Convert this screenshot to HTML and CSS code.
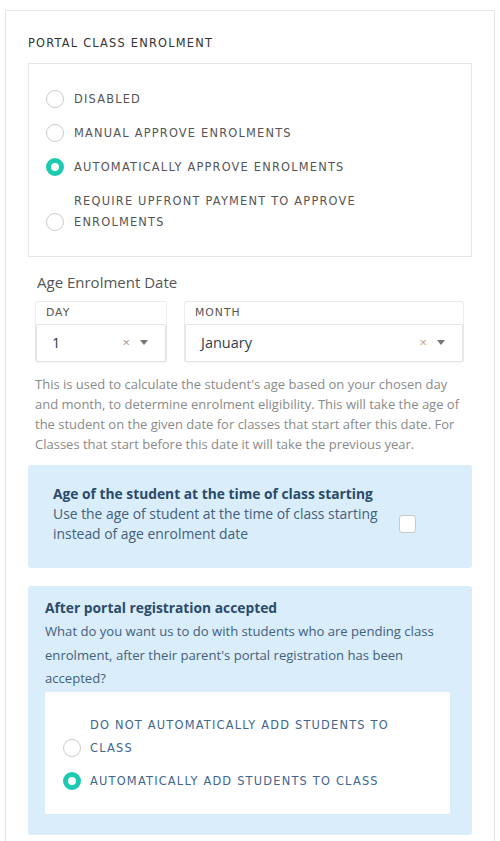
FILE: index.html
```html
<!DOCTYPE html>
<html lang="en">
<head>
<meta charset="utf-8">
<title>Portal Class Enrolment</title>
<link rel="stylesheet" href="styles.css">
</head>
<body>
<div class="card">
  <h2 class="section-title">Portal Class Enrolment</h2>

  <div class="radio-box">
    <label class="radio-row"><span class="radio"></span><span class="radio-text">Disabled</span></label>
    <label class="radio-row"><span class="radio"></span><span class="radio-text">Manual approve enrolments</span></label>
    <label class="radio-row"><span class="radio checked"></span><span class="radio-text">Automatically approve enrolments</span></label>
    <label class="radio-row"><span class="radio"></span><span class="radio-text">Require upfront payment to approve<br>enrolments</span></label>
  </div>

  <div class="date-section">
    <div class="date-heading">Age Enrolment Date</div>
    <div class="date-fields">
      <div class="field field-day">
        <div class="field-label">Day</div>
        <div class="select">
          <span class="value">1</span>
          <span class="clear">×</span>
          <span class="caret"></span>
        </div>
      </div>
      <div class="field field-month">
        <div class="field-label">Month</div>
        <div class="select">
          <span class="value">January</span>
          <span class="clear clear-hover">×</span>
          <span class="caret"></span>
        </div>
      </div>
    </div>
    <p class="help">This is used to calculate the student's age based on your chosen day and month, to determine enrolment eligibility. This will take the age of the student on the given date for classes that start after this date. For Classes that start before this date it will take the previous year.</p>
  </div>

  <div class="info-box info-age">
    <div class="info-title">Age of the student at the time of class starting</div>
    <div class="info-row">
      <div class="info-text">Use the age of student at the time of class starting instead of age enrolment date</div>
      <span class="checkbox"></span>
    </div>
  </div>

  <div class="info-box info-after">
    <div class="info-title">After portal registration accepted</div>
    <div class="info-text wide">What do you want us to do with students who are pending class enrolment, after their parent's portal registration has been accepted?</div>
    <div class="choice-box">
      <label class="radio-row blue"><span class="radio"></span><span class="radio-text">Do not automatically add students to<br>class</span></label>
      <label class="radio-row blue"><span class="radio checked"></span><span class="radio-text">Automatically add students to class</span></label>
    </div>
  </div>
</div>
</body>
</html>
```

FILE: styles.css
```css
* { box-sizing: border-box; }

html, body {
  margin: 0;
  padding: 0;
  background: #ffffff;
}

body {
  font-family: "Open Sans", "Noto Sans", sans-serif;
  color: #555;
}

.card {
  margin: 10px 0 0 5px;
  width: 490px;
  min-height: 860px;
  border: 1px solid #e7e7e7;
  border-bottom: none;
  padding: 24px 22px 0 22px;
}

.section-title {
  margin: 0 0 12px 0;
  font-family: "DejaVu Sans", sans-serif;
  font-weight: normal;
  font-size: 11.4px;
  line-height: 16px;
  letter-spacing: 1.2px;
  text-transform: uppercase;
  color: #333;
}

.radio-box {
  border: 1px solid #e6e6e6;
  padding: 18px 10px 17px 17px;
}

.radio-row {
  display: flex;
  align-items: flex-end;
  padding: 6.5px 0;
}

.radio {
  flex: 0 0 18px;
  width: 18px;
  height: 18px;
  border-radius: 50%;
  border: 1px solid #cccccc;
  background: #fff;
  margin-bottom: 1.5px;
}

.radio.checked {
  border: 5.5px solid #1cc9b1;
}

.radio-text {
  margin-left: 10px;
  font-family: "DejaVu Sans", sans-serif;
  font-size: 11.4px;
  line-height: 21px;
  letter-spacing: 1.2px;
  text-transform: uppercase;
  color: #555;
}

.date-section {
  padding: 15px 8px 0 7px;
}

.date-heading {
  font-size: 15px;
  line-height: 20px;
  padding-left: 2px;
  color: #555;
}

.date-fields {
  display: flex;
  gap: 17px;
  margin-top: 9px;
}

.field {
  border: 1px solid #ececec;
  border-radius: 2px;
}

.field-day { width: 132px; }
.field-month { width: 280px; }

.field-label {
  height: 22px;
  line-height: 22px;
  padding-left: 10px;
  font-family: "DejaVu Sans", sans-serif;
  font-size: 10.8px;
  letter-spacing: 1px;
  text-transform: uppercase;
  color: #555;
}

.select {
  display: flex;
  align-items: center;
  height: 38px;
  margin: 0 0 -1px 0;
  border: 1px solid #e4e4e4;
  border-radius: 2px;
  box-shadow: 0 1px 2px rgba(0, 0, 0, 0.05);
  padding: 0 17px 2px 15px;
  background: #fff;
}

.value {
  flex: 1;
  font-size: 14.5px;
  color: #2c3e50;
}

.clear {
  font-size: 13px;
  color: #999;
  margin-right: 10px;
}

.clear-hover { color: #c99c86; }

.caret {
  width: 0;
  height: 0;
  border-left: 4.5px solid transparent;
  border-right: 4.5px solid transparent;
  border-top: 5px solid #777;
}

.help {
  margin: 12px 0 0 0;
  font-size: 13px;
  line-height: 20px;
  color: #8a8a8a;
}

.info-box {
  background: #d9edfa;
  border-radius: 3px;
  color: #44607d;
}

.info-age {
  margin-top: 11px;
  padding: 19px 22px 24px 25px;
}

.info-after {
  margin-top: 18px;
  padding: 10px 22px 21px 17px;
}

.info-title {
  font-size: 13.8px;
  font-weight: bold;
  line-height: 20px;
  color: #2b4b6b;
}

.info-after .info-title { line-height: 24px; }

.info-row {
  display: flex;
  align-items: center;
}

.info-text {
  width: 336px;
  font-size: 13.9px;
  line-height: 20px;
}

.info-text.wide {
  width: auto;
  font-size: 13.1px;
  line-height: 23.5px;
}

.checkbox {
  flex: 0 0 17px;
  width: 17px;
  height: 18px;
  margin-left: 10px;
  border: 1px solid #c9c9c9;
  border-radius: 3px;
  background: #fff;
}

.choice-box {
  margin-top: 1px;
  background: #fff;
  border-radius: 2px;
  padding: 17px 10px 16px 18px;
}

.radio-row.blue {
  padding: 5px 0;
}

.radio-row.blue .radio-text {
  margin-left: 9px;
  line-height: 23px;
  color: #3e6690;
}

.radio-row.blue .radio {
  margin-bottom: 2.5px;
}
```
